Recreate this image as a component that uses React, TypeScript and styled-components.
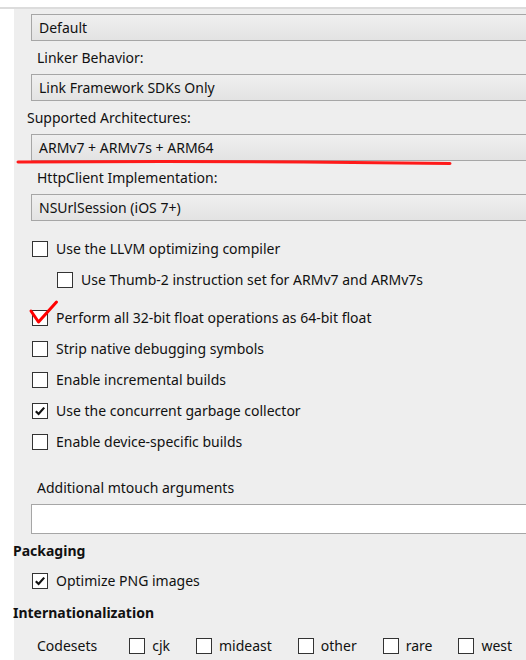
import React from "react";
import styled, { createGlobalStyle } from "styled-components";

const GlobalStyle = createGlobalStyle`
  html, body {
    margin: 0;
    padding: 0;
    background: #ffffff;
  }
  body {
    font-family: "Noto Sans", "Open Sans", Arial, sans-serif;
    font-size: 14px;
    color: #111111;
  }
`;

const Page = styled.div`
  width: 526px;
  height: 660px;
  overflow: hidden;
  display: flex;
  flex-direction: column;
`;

const TopStrip = styled.div`
  height: 7px;
  background: #ffffff;
  border-bottom: 2px solid #dcdcdc;
  flex: none;
`;

const Body = styled.div`
  flex: 1;
  display: flex;
`;

const Gutter = styled.div`
  width: 14px;
  flex: none;
  background: #ffffff;
`;

const Panel = styled.div`
  flex: 1;
  background: #eeeeee;
  padding: 5px 0 0 17px;
  display: flex;
  flex-direction: column;
  overflow: visible;
`;

const FieldLabel = styled.div<{ $outdent?: boolean; $top?: number }>`
  height: 20px;
  line-height: 20px;
  margin: ${(p) => p.$top ?? 7}px 0 6px ${(p) => (p.$outdent ? "-4px" : "6px")};
  white-space: nowrap;
`;

const Select = styled.div`
  height: 25px;
  margin-right: -20px;
  border: 1px solid #a6a6a6;
  background: linear-gradient(#efefef, #e3e3e3);
  padding: 0 7px;
  line-height: 25px;
  white-space: nowrap;
`;

const Annotated = styled.div`
  position: relative;
`;

const RedStroke = styled.svg`
  position: absolute;
  left: -14px;
  top: 24px;
  pointer-events: none;
  overflow: visible;
`;

const CheckList = styled.div`
  display: flex;
  flex-direction: column;
  margin-top: 12px;
`;

const CheckRow = styled.label<{ $indent?: number; $gapTop?: number }>`
  position: relative;
  display: flex;
  align-items: center;
  height: 31px;
  margin-left: ${(p) => 1 + (p.$indent ?? 0)}px;
  margin-top: ${(p) => p.$gapTop ?? 0}px;
  gap: 8px;
  white-space: nowrap;
`;

const Box = styled.span`
  width: 14px;
  height: 14px;
  flex: none;
  border: 1px solid #333333;
  background: #ffffff;
  display: flex;
  align-items: center;
  justify-content: center;
`;

const RedTick = styled.svg`
  position: absolute;
  left: -2px;
  top: -1px;
  overflow: visible;
  pointer-events: none;
`;

const TextInput = styled.div`
  height: 28px;
  margin-right: -20px;
  border: 1px solid #a6a6a6;
  background: #ffffff;
`;

const SectionTitle = styled.div<{ $top: number }>`
  height: 20px;
  line-height: 20px;
  margin: ${(p) => p.$top}px 0 0 -18px;
  font-weight: 700;
  white-space: nowrap;
`;

const CodesetRow = styled.div`
  display: flex;
  align-items: center;
  height: 31px;
  margin-top: 7px;
  padding-left: 6px;
  white-space: nowrap;
`;

const CodesetTitle = styled.span`
  margin-right: 32px;
`;

const Codeset = styled.label`
  display: flex;
  align-items: center;
  gap: 7px;
  margin-right: 26px;
`;

function Tick() {
  return (
    <svg width="12" height="12" viewBox="0 0 12 12">
      <path d="M1.8 6.2 L4.6 9 L10.2 2.6" fill="none" stroke="#111" strokeWidth="2.2" />
    </svg>
  );
}

type Check = { text: string; checked?: boolean; indent?: number; gapTop?: number; red?: boolean };

const checks: Check[] = [
  { text: "Use the LLVM optimizing compiler" },
  { text: "Use Thumb-2 instruction set for ARMv7 and ARMv7s", indent: 25 },
  { text: "Perform all 32-bit float operations as 64-bit float", gapTop: 7, red: true },
  { text: "Strip native debugging symbols" },
  { text: "Enable incremental builds" },
  { text: "Use the concurrent garbage collector", checked: true },
  { text: "Enable device-specific builds" },
];

const codesets = ["cjk", "mideast", "other", "rare", "west"];

export default function App() {
  return (
    <Page>
      <GlobalStyle />
      <TopStrip />
      <Body>
        <Gutter />
        <Panel>
          <Select>Default</Select>
          <FieldLabel>Linker Behavior:</FieldLabel>
          <Select>Link Framework SDKs Only</Select>
          <FieldLabel $outdent>Supported Architectures:</FieldLabel>
          <Annotated>
            <Select>ARMv7 + ARMv7s + ARM64</Select>
            <RedStroke width="440" height="8" viewBox="0 0 440 8">
              <path
                d="M1 4 C 120 3.2, 300 3.6, 433 5.6"
                fill="none"
                stroke="#ff1a1a"
                strokeWidth="3"
                strokeLinecap="round"
              />
            </RedStroke>
          </Annotated>
          <FieldLabel>HttpClient Implementation:</FieldLabel>
          <Select>NSUrlSession (iOS 7+)</Select>

          <CheckList>
            {checks.map((c, i) => (
              <CheckRow key={i} $indent={c.indent} $gapTop={c.gapTop}>
                <Box>{c.checked && <Tick />}</Box>
                {c.text}
                {c.red && (
                  <RedTick width="30" height="26" viewBox="0 0 30 26">
                    <path
                      d="M1 10 L8.5 21 L26.5 1"
                      fill="none"
                      stroke="#ff0000"
                      strokeWidth="3"
                      strokeLinecap="round"
                      strokeLinejoin="round"
                    />
                  </RedTick>
                )}
              </CheckRow>
            ))}
          </CheckList>

          <FieldLabel $top={21}>Additional mtouch arguments</FieldLabel>
          <TextInput />

          <SectionTitle $top={7}>Packaging</SectionTitle>
          <CheckRow $gapTop={4}>
            <Box>
              <Tick />
            </Box>
            Optimize PNG images
          </CheckRow>

          <SectionTitle $top={7}>Internationalization</SectionTitle>
          <CodesetRow>
            <CodesetTitle>Codesets</CodesetTitle>
            {codesets.map((c) => (
              <Codeset key={c}>
                <Box />
                {c}
              </Codeset>
            ))}
          </CodesetRow>
        </Panel>
      </Body>
    </Page>
  );
}
